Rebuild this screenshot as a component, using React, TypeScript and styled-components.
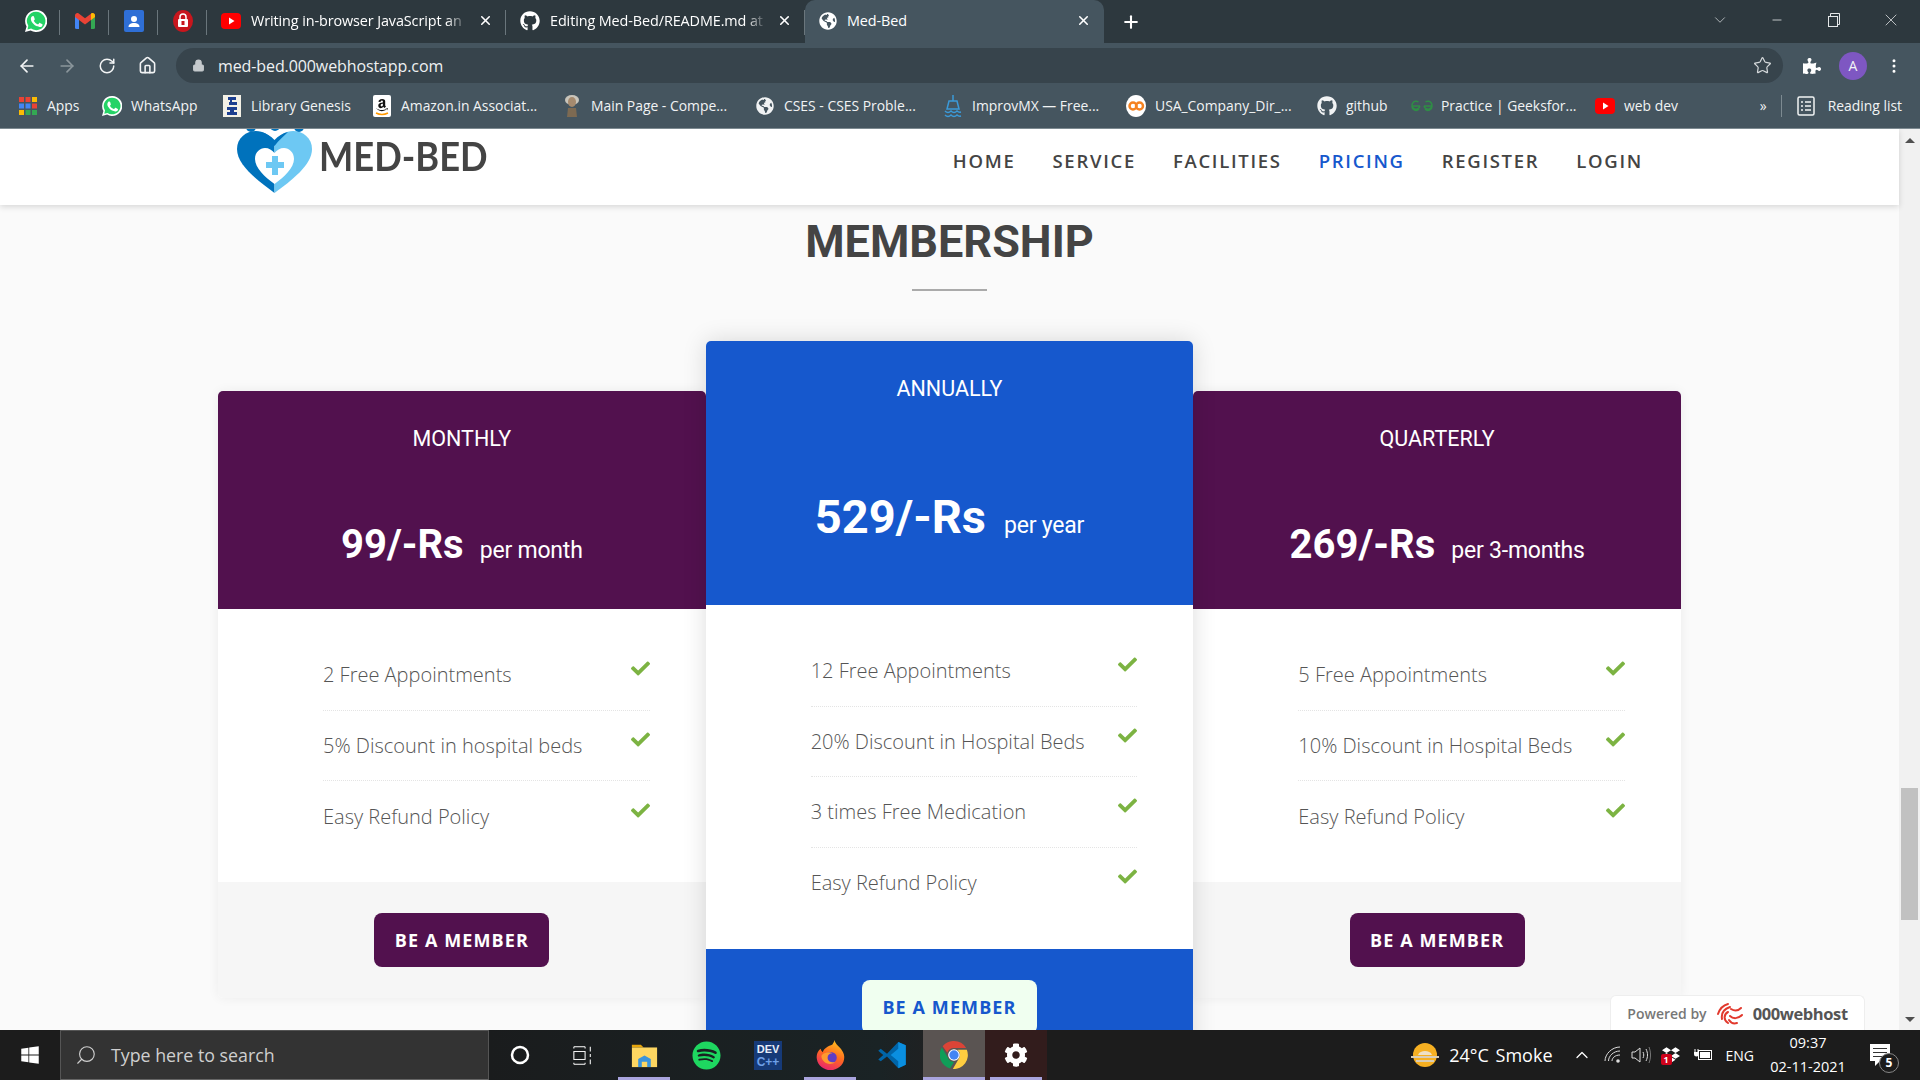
import React from "react"
import styled, {createGlobalStyle} from "styled-components"
import {ArrowLeft, ArrowRight, RotateCw, Home, Star, X, Plus, ChevronDown, Minus, Lock, MoreVertical, ChevronUp, Search} from "lucide-react"
import {FaGithub, FaGlobeAmericas, FaAmazon, FaPuzzlePiece, FaCheck, FaWindows, FaSpotify, FaCog, FaDropbox} from "react-icons/fa"

const GlobalStyle = createGlobalStyle`
    html, body {
        margin: 0;
        padding: 0;
        overflow: hidden;
        background: #fafafa;
    }
    * {
        box-sizing: border-box;
    }
`

const Screen = styled.div`
    width: 1920px;
    height: 1080px;
    display: flex;
    flex-direction: column;
    overflow: hidden;
    font-family: "Open Sans", "Liberation Sans", sans-serif;
`

/* browser chrome */
const TabStrip = styled.div`
    height: 43px;
    flex: none;
    display: flex;
    align-items: stretch;
    padding-left: 11px;
    background: #2d383e;
    color: #fff;
`

const PinnedTab = styled.div`
    width: 49px;
    display: flex;
    align-items: center;
    justify-content: center;
    padding-bottom: 2px;
    position: relative;
    &::after {
        content: "";
        position: absolute;
        right: 0;
        top: 10px;
        bottom: 8px;
        width: 1px;
        background: #6a767c;
    }
`

const Tab = styled.div<{$active?: boolean}>`
    width: 299px;
    display: flex;
    align-items: center;
    gap: 10px;
    padding: 0 13px 2px 14px;
    font-size: 14.4px;
    position: relative;
    ${({$active}) => $active ? `
        background: #45555f;
        border-radius: 10px 10px 0 0;
    ` : `
        &::after {
            content: "";
            position: absolute;
            right: 0;
            top: 10px;
            bottom: 8px;
            width: 1px;
            background: #6a767c;
        }
    `}
`

const TabTitle = styled.span<{$fade?: boolean}>`
    flex: 1;
    min-width: 0;
    white-space: nowrap;
    letter-spacing: -0.1px;
    ${({$fade}) => $fade && `
        -webkit-mask-image: linear-gradient(to right, #000 90%, transparent 100%);
        mask-image: linear-gradient(to right, #000 90%, transparent 100%);
    `}
`

const NewTab = styled.div`
    width: 54px;
    display: flex;
    align-items: center;
    justify-content: center;
`

const WindowControls = styled.div`
    margin-left: auto;
    display: flex;
    align-items: center;
    padding-bottom: 4px;
`

const WindowButton = styled.div<{$width: number}>`
    width: ${({$width}) => $width}px;
    display: flex;
    justify-content: center;
    color: #d6dadc;
`

const RestoreIcon = () => (
    <svg width="14" height="14" viewBox="0 0 14 14" fill="none" stroke="#e4e7e8" strokeWidth="1">
        <rect x="1.5" y="3.5" width="9" height="10" />
        <path d="M3.5 3.5V0.5H12.5V11.5H10.5" />
    </svg>
)

const Toolbar = styled.div`
    height: 45px;
    flex: none;
    display: flex;
    align-items: center;
    padding-left: 7px;
    background: #45555f;
    color: #fff;
`

const ToolButton = styled.div<{$dim?: boolean}>`
    width: 40px;
    display: flex;
    justify-content: center;
    color: ${({$dim}) => $dim ? "#8b969c" : "#f2f4f5"};
`

const AddressPill = styled.div`
    width: 1607px;
    height: 35px;
    margin-left: 9px;
    padding: 0 11px 0 16px;
    display: flex;
    align-items: center;
    gap: 13px;
    border-radius: 18px;
    background: #37444c;
    font-size: 16px;
    letter-spacing: -0.1px;
    color: #eef1f2;
`

const AddressText = styled.span`
    flex: 1;
`

const ToolGroup = styled.div`
    display: flex;
    align-items: center;
    gap: 12px;
    padding-left: 20px;
`

const Avatar = styled.div`
    width: 28px;
    height: 28px;
    border-radius: 50%;
    background: #7e57c2;
    font-size: 14px;
    display: flex;
    align-items: center;
    justify-content: center;
`

const BookmarkBar = styled.div`
    height: 41px;
    flex: none;
    display: flex;
    align-items: center;
    padding: 0 0 5px 19px;
    background: #45555f;
    color: #f1f3f4;
    font-size: 13.9px;
    border-bottom: 1px solid #7d8a91;
`

const Bookmark = styled.div<{$width: number}>`
    width: ${({$width}) => $width}px;
    flex: none;
    display: flex;
    align-items: center;
    gap: 10px;
    white-space: nowrap;
`

const BookmarkIcon = styled.span`
    width: 18px;
    flex: none;
    display: flex;
    align-items: center;
    justify-content: center;
    & svg {
        flex: none;
    }
`

const BookmarkEnd = styled.div`
    margin-left: auto;
    display: flex;
    align-items: center;
    padding-right: 18px;
    white-space: nowrap;
    & b {
        font-weight: 400;
        margin-right: 14px;
    }
    & i {
        width: 1px;
        height: 22px;
        background: #7d8a91;
        margin-right: 15px;
    }
    & span {
        margin-left: 13px;
    }
`

/* page */
const Viewport = styled.div`
    flex: 1;
    min-height: 0;
    display: flex;
    position: relative;
    overflow: hidden;
`

const Page = styled.div`
    width: 1899px;
    background: #fafafa;
`

const Scrollbar = styled.div`
    width: 21px;
    background: #f1f1f1;
    display: flex;
    flex-direction: column;
    align-items: center;
    justify-content: space-between;
    padding: 9px 0 8px;
    position: relative;
`

const ScrollArrow = styled.div<{$down?: boolean}>`
    width: 0;
    height: 0;
    border-left: 5px solid transparent;
    border-right: 5px solid transparent;
    ${({$down}) => $down ? "border-top: 5px solid #505050;" : "border-bottom: 5px solid #505050;"}
`

const ScrollThumb = styled.div`
    position: absolute;
    left: 2px;
    right: 2px;
    top: 659px;
    height: 132px;
    background: #c1c1c1;
`

const Header = styled.header`
    height: 76px;
    background: #fff;
    box-shadow: 0 2px 6px rgba(0, 0, 0, 0.14);
    display: flex;
    align-items: flex-start;
    justify-content: space-between;
    padding: 0 256px 0 237px;
    position: relative;
    z-index: 3;
`

const Brand = styled.div`
    display: flex;
    align-items: flex-start;
    gap: 7px;
    height: 64px;
    overflow: hidden;
    font-family: "Lato", sans-serif;
    & svg {
        flex: none;
        margin-top: -9px;
    }
`

const BrandName = styled.span`
    font-size: 41px;
    line-height: 54px;
    font-weight: 700;
    color: #444;
    transform: scaleX(0.885);
    transform-origin: left center;
`

const Nav = styled.nav`
    display: flex;
    gap: 37px;
    padding-top: 18px;
`

const NavLink = styled.a<{$active?: boolean}>`
    font-size: 18.5px;
    line-height: 28px;
    font-weight: 600;
    letter-spacing: 1.7px;
    color: ${({$active}) => $active ? "#1658cd" : "#444"};
`

const Section = styled.section`
    display: flex;
    flex-direction: column;
    align-items: center;
`

const Title = styled.h2`
    margin: 10px 0 0;
    font-family: "Roboto", sans-serif;
    font-size: 45px;
    line-height: 54px;
    font-weight: 700;
    color: #444;
`

const TitleRule = styled.div`
    width: 75px;
    height: 2px;
    margin-top: 20px;
    background: #aaa;
`

const Plans = styled.div`
    width: 1463px;
    margin-top: 50px;
    display: grid;
    grid-template-columns: repeat(3, 1fr);
    align-items: start;
`

const Card = styled.div<{$featured?: boolean}>`
    background: #fff;
    border-radius: 5px;
    overflow: hidden;
    ${({$featured}) => $featured ? `
        position: relative;
        z-index: 2;
        box-shadow: 0 0 25px rgba(0, 0, 0, 0.14);
    ` : `
        margin-top: 50px;
        box-shadow: 0 0 12px rgba(0, 0, 0, 0.06);
    `}
`

const CardHead = styled.div<{$featured?: boolean}>`
    height: ${({$featured}) => $featured ? 264 : 218}px;
    padding-top: 35px;
    background: ${({$featured}) => $featured ? "#1658cd" : "#52114e"};
    color: #fff;
    font-family: "Roboto", sans-serif;
    text-align: center;
`

const PlanName = styled.div`
    font-size: 21.5px;
    line-height: 26px;
    font-weight: 400;
`

const Price = styled.div<{$featured?: boolean}>`
    margin-top: ${({$featured}) => $featured ? 87 : 65}px;
    display: flex;
    align-items: baseline;
    justify-content: center;
    gap: ${({$featured}) => $featured ? 18 : 16}px;
    line-height: 56px;
`

const Amount = styled.span<{$featured?: boolean}>`
    font-size: ${({$featured}) => $featured ? 47 : 40}px;
    font-weight: 700;
`

const Per = styled.span`
    font-size: 23px;
    font-weight: 400;
    letter-spacing: -0.2px;
`

const Features = styled.ul`
    list-style: none;
    margin: 0;
    padding: 31px 56px 30.5px 105px;
`

const Feature = styled.li`
    height: 70.5px;
    display: flex;
    align-items: center;
    justify-content: space-between;
    border-bottom: 1px dotted #e4e4e4;
    font-size: 20px;
    font-weight: 300;
    color: #555;
    &:last-child {
        border-bottom: none;
    }
    & svg {
        margin-bottom: 12px;
        color: #7cb342;
    }
`

const CardFoot = styled.div<{$featured?: boolean}>`
    height: 116px;
    padding-top: 31px;
    display: flex;
    justify-content: center;
    background: ${({$featured}) => $featured ? "#1658cd" : "#f6f6f6"};
`

const MemberButton = styled.button<{$featured?: boolean}>`
    width: 175px;
    height: 54px;
    border: none;
    border-radius: 8px;
    font-family: "Open Sans", sans-serif;
    font-size: 18px;
    font-weight: 700;
    letter-spacing: 1.1px;
    background: ${({$featured}) => $featured ? "#f0fff0" : "#52114e"};
    color: ${({$featured}) => $featured ? "#1658cd" : "#fff"};
`

const HostBadge = styled.div`
    position: absolute;
    right: 55px;
    bottom: 0;
    width: 255px;
    height: 35px;
    display: flex;
    align-items: center;
    justify-content: center;
    gap: 9px;
    background: #fff;
    border: 1px solid #eee;
    border-bottom: none;
    border-radius: 6px 6px 0 0;
    z-index: 4;
    font-size: 14px;
    font-weight: 600;
    color: #777;
`

const HostName = styled.span`
    font-size: 16.5px;
    font-weight: 700;
    color: #555;
    letter-spacing: -0.4px;
`

/* windows taskbar */
const Taskbar = styled.div`
    height: 50px;
    flex: none;
    display: flex;
    align-items: stretch;
    background: #1c1c1c;
    color: #fff;
`

const StartButton = styled.div`
    width: 60px;
    display: flex;
    align-items: center;
    justify-content: center;
`

const SearchBox = styled.div`
    width: 429px;
    display: flex;
    align-items: center;
    gap: 14px;
    padding-left: 14px;
    background: #333;
    border: 1px solid #555;
    border-bottom-color: #666;
    color: #cfcfcf;
    font-size: 17.8px;
`

const MirroredSearch = styled(Search)`
    transform: scaleX(-1);
`

const AppIcons = styled.div`
    display: flex;
    background: linear-gradient(to right, #1a1c1d, #1a2325 70%, #2c1c1c);
`

const AppTile = styled.div<{$active?: boolean, $open?: boolean, $tint?: string}>`
    width: 62px;
    display: flex;
    align-items: center;
    justify-content: center;
    position: relative;
    background: ${({$active, $tint}) => $active ? "#5a5452" : $tint || "transparent"};
    ${({$open, $active}) => ($open || $active) && `
        &::after {
            content: "";
            position: absolute;
            left: ${$active ? 0 : 5}px;
            right: ${$active ? 0 : 5}px;
            bottom: 0;
            height: 3px;
            background: #a9a4de;
        }
    `}
`

const Tray = styled.div`
    margin-left: auto;
    display: flex;
    align-items: center;
    padding-right: 20px;
`

const Weather = styled.div`
    display: flex;
    align-items: center;
    gap: 10px;
    font-size: 18px;
    white-space: nowrap;
    margin-right: 13px;
    & span {
        word-spacing: 2px;
    }
`

const TrayIcon = styled.div<{$width: number}>`
    width: ${({$width}) => $width}px;
    display: flex;
    justify-content: center;
    position: relative;
`

const TrayBadge = styled.b`
    position: absolute;
    left: 6px;
    top: 8px;
    width: 11px;
    height: 11px;
    border-radius: 2px;
    background: #d0021b;
    font-size: 9px;
    line-height: 11px;
    text-align: center;
`

const Lang = styled.div`
    font-size: 14px;
    margin: 0 9px 0 8px;
`

const Clock = styled.div`
    width: 90px;
    text-align: center;
    font-size: 14.5px;
    line-height: 24px;
    margin-right: 7px;
`

const Notify = styled.div`
    width: 40px;
    display: flex;
    justify-content: center;
    position: relative;
`

const NotifyCount = styled.b`
    position: absolute;
    right: 1px;
    top: 9px;
    width: 20px;
    height: 20px;
    border-radius: 50%;
    background: #1c1c1c;
    border: 1px solid #888;
    font-size: 12px;
    line-height: 18px;
    text-align: center;
`

/* small drawn icons */
const WhatsApp = ({size}: {size: number}) => (
    <svg width={size} height={size} viewBox="0 0 24 24">
        <path fill="#fff" d="M12 0a12 12 0 0 0-10.300 18L0 24l6.200-1.700A12 12 0 1 0 12 0z" />
        <path fill="#25d366" d="M12 2a10 10 0 0 0-8.400 15.300L2.700 21.300l4-1A10 10 0 1 0 12 2z" />
        <path fill="#fff" d="M8.600 6.600c-.4 0-.9.200-1.200.6-.5.600-1 1.400-1 2.600 0 1.500 1 3.100 1.200 3.300.2.300 2.200 3.500 5.400 4.700 2.600 1 3.200.8 3.800.8.600-.1 1.900-.8 2.100-1.500.3-.8.300-1.400.2-1.500-.1-.2-.3-.3-.6-.4l-2.200-1.100c-.3-.1-.5-.1-.7.200l-1 1.200c-.2.200-.4.200-.7.100-.3-.2-1.300-.5-2.500-1.500-.9-.8-1.500-1.800-1.700-2.100-.2-.3 0-.5.100-.6l.5-.6.300-.5c.1-.2.100-.4 0-.5L9.800 7.300c-.2-.6-.5-.6-.7-.7h-.5z" />
    </svg>
)

const Gmail = () => (
    <svg width="20" height="16" viewBox="0 0 20 16">
        <path fill="#4285f4" d="M0 3h4v13H1.500A1.500 1.500 0 0 1 0 14.500z" />
        <path fill="#34a853" d="M16 3h4v11.500a1.500 1.500 0 0 1-1.500 1.500H16z" />
        <path fill="#ea4335" d="M0 2.500C0 .5 2.200-.6 3.700.5L10 5.200 16.300.5C17.800-.6 20 .5 20 2.500V4l-4 3-6 4.500L4 7 0 4z" />
        <path fill="#fbbc04" d="M16 7l4-3V2.500C20 .5 17.800-.6 16.300.5L16 .8z" />
    </svg>
)

const Contacts = () => (
    <svg width="20" height="22" viewBox="0 0 20 22">
        <rect width="20" height="22" rx="2" fill="#2f6fd6" />
        <circle cx="10" cy="9" r="3" fill="#fff" />
        <path fill="#fff" d="M4.500 17c0-3 2.500-4 5.500-4s5.500 1 5.500 4z" />
    </svg>
)

const RedLock = () => (
    <svg width="20" height="22" viewBox="0 0 20 22">
        <ellipse cx="10" cy="11" rx="10" ry="11" fill="#c8161d" />
        <rect x="5" y="9" width="10" height="8" rx="1" fill="#fff" />
        <path fill="none" stroke="#fff" strokeWidth="1.500" d="M7 9V7a3 3 0 0 1 6 0v2" />
        <rect x="8.500" y="11" width="3" height="4" fill="#c8161d" />
    </svg>
)

const YouTube = () => (
    <svg width="20" height="16" viewBox="0 0 20 16">
        <rect width="20" height="16" rx="4" fill="#f00" />
        <path fill="#fff" d="M8 4.500v7L13.500 8z" />
    </svg>
)

const AppsGrid = () => (
    <svg width="18" height="18" viewBox="0 0 18 18">
        {["#ea4335", "#ea4335", "#fbbc04", "#4285f4", "#4285f4", "#ea4335", "#fbbc04", "#34a853", "#34a853"].map((c, i) => (
            <rect key={i} x={(i % 3) * 6.5} y={Math.floor(i / 3) * 6.5} width="5" height="5" fill={c} />
        ))}
    </svg>
)

const LibGenBook = () => (
    <svg width="18" height="22" viewBox="0 0 18 22">
        <rect width="18" height="22" fill="#f4f1e6" />
        <path fill="#1d3f8f" d="M5 2h8v3H9v2h5v3H6V7h1V5H5zM4 12h10v3h-3v2h3v3H4v-3h3v-2H4z" />
    </svg>
)

const AmazonIcon = () => (
    <svg width="18" height="22" viewBox="0 0 18 22">
        <rect width="18" height="22" rx="2" fill="#fff" />
        <foreignObject x="2" y="2" width="14" height="16"><div><FaAmazon size={14} color="#111" /></div></foreignObject>
        <path d="M3 18c4 2 8 2 12 0" fill="none" stroke="#f90" strokeWidth="1.500" />
    </svg>
)

const Einstein = () => (
    <svg width="18" height="24" viewBox="0 0 18 24">
        <ellipse cx="9" cy="6" rx="7" ry="5" fill="#c9c5bb" />
        <ellipse cx="9" cy="8" rx="4" ry="5" fill="#a58a6e" />
        <path fill="#7d6a52" d="M5 14h8l1 9H4z" />
    </svg>
)

const ImprovMX = () => (
    <svg width="18" height="24" viewBox="0 0 18 24" fill="none" stroke="#3b9ad9" strokeWidth="1.500">
        <path d="M9 1v6M5 7h8l2 8H3zM1 17c2 2 4 2 6 0 2 2 4 2 6 0 1 1 2 1.500 4 1M1 21c2 2 4 2 6 0 2 2 4 2 6 0 1 1 2 1.500 4 1" />
    </svg>
)

const CoBadge = () => (
    <svg width="20" height="22" viewBox="0 0 20 22">
        <ellipse cx="10" cy="11" rx="10" ry="11" fill="#fff" />
        <circle cx="7" cy="11" r="3.500" fill="none" stroke="#f58220" strokeWidth="2.500" />
        <circle cx="13.500" cy="11" r="3.500" fill="none" stroke="#f58220" strokeWidth="2.500" />
    </svg>
)

const Geeks = () => (
    <svg width="22" height="14" viewBox="0 0 22 14" fill="none" stroke="#2f8d46" strokeWidth="1.500">
        <path d="M1 7h8M9 7a4 4 0 1 1-1.500-4M13 7h8M13 7a4 4 0 1 0 1.500-4M1 7a4 4 0 0 0 7 3M21 7a4 4 0 0 1-7 3" />
    </svg>
)

const ReadingList = () => (
    <svg width="18" height="20" viewBox="0 0 18 20" fill="none" stroke="#f1f3f4" strokeWidth="1.500">
        <rect x="1" y="1" width="16" height="18" rx="1.500" />
        <path d="M4 6h2M8 6h6M4 10h2M8 10h6M4 14h2M8 14h6" />
    </svg>
)

const MedBedLogo = () => (
    <svg width="75" height="73" viewBox="0 0 75 73">
        <path fill="#0072bc" d="M37.500 73C20 60 0 45 0 29 0 18 9 11 19 11c7 0 14 4 18.500 11z" />
        <path fill="#6dc8f3" d="M37.500 73C55 60 75 45 75 29 75 18 66 11 56 11c-7 0-14 4-18.500 11z" />
        <path fill="#fff" d="M37.500 64C28 57 18 48 18 39c0-7 5-11 10-11 4 0 7 2 9.500 5 2.500-3 5.500-5 9.500-5 5 0 10 4 10 11 0 9-10 18-19.500 25z" />
        <path fill="#6dc8f3" d="M35 36h6v6h6v6h-6v7h-6v-7h-6v-6h6z" />
        <path fill="#0072bc" d="M24 12c5 1 10 4 13.500 8 3.500-4 8.500-7 13.500-8-4 4-9 8-13.500 14C33 20 28 16 24 12z" />
        <circle cx="14" cy="7" r="5" fill="#0072bc" />
        <circle cx="38" cy="6" r="5" fill="#0072bc" />
        <circle cx="62" cy="7" r="5" fill="#0072bc" />
    </svg>
)

const HostSwirl = () => (
    <svg width="28" height="24" viewBox="0 0 26 24" fill="none" stroke="#e2392d" strokeWidth="2" strokeLinecap="round">
        <path d="M1 13C3 7 7 4 11 3M5 18C4 12 7 8 13 6M11 22C6 19 7 13 11 11M24 7c-3 3-7 3-10 1M25 14c-4 4-9 4-12 1M20 22c-3 1-6 0-8-3" />
    </svg>
)

const Explorer = () => (
    <svg width="27" height="25" viewBox="0 0 30 28" preserveAspectRatio="none">
        <path fill="#e6a50c" d="M1 2h10l3 3h-13z" />
        <rect x="1" y="5" width="28" height="22" fill="#fdd661" />
        <path fill="#3a94dc" d="M8 27v-9l7-4 7 4v9h-4v-6h-6v6z" />
    </svg>
)

const DevCpp = () => (
    <svg width="28" height="29" viewBox="0 0 28 29">
        <rect width="28" height="29" fill="#163a78" />
        <text x="14" y="12" textAnchor="middle" fontSize="11" fontWeight="700" fill="#e8eef8" fontFamily="Liberation Sans, sans-serif">DEV</text>
        <text x="14" y="25" textAnchor="middle" fontSize="12" fontWeight="700" fill="#6fa0e8" fontFamily="Liberation Sans, sans-serif">C++</text>
    </svg>
)

const Firefox = () => (
    <svg width="29" height="30" viewBox="0 0 30 34" preserveAspectRatio="none">
        <defs>
            <linearGradient id="fxBody" x1="0.7" y1="0" x2="0.3" y2="1">
                <stop offset="0" stopColor="#ffc21f" />
                <stop offset="0.5" stopColor="#ff6a1f" />
                <stop offset="1" stopColor="#e8246e" />
            </linearGradient>
        </defs>
        <path fill="url(#fxBody)" d="M19 0c1 4 3 6 6 9 3 4 5 8 4 13-1 7-7 12-14 12S2 29 1 22C0 17 2 12 5 10c0 2 1 3 2 4 1-5 6-7 10-9 1-2 2-3 2-5z" />
        <circle cx="15" cy="20" r="6.500" fill="#5f3dc4" />
        <path fill="#ff9a2e" d="M6 17c3-3 8-4 11-2-3 0-5 2-5 5 0 4 4 6 8 5-3 3-9 3-12-1-2-2-3-5-2-7z" />
    </svg>
)

const VsCode = () => (
    <svg width="30" height="30" viewBox="0 0 24 24">
        <path fill="#0065a9" d="M1 8.500 3 7l5 3.900L17 1.500l6 2.700v15.600l-6 2.700-9-9.400L3 17l-2-1.500L5 12z" />
        <path fill="#0a8fe0" d="M17 1.500l6 2.700v15.600l-6 2.700V17l-6-5 6-5z" />
    </svg>
)

const ChromeLogo = () => (
    <svg width="28" height="28" viewBox="0 0 24 24">
        <path fill="#db4437" d="M12 0a12 12 0 0 1 10.400 6H12a6 6 0 0 0-5.700 4L2.300 4.400A12 12 0 0 1 12 0z" />
        <path fill="#0f9d58" d="M1.600 5.500l5 8.500A6 6 0 0 0 12 18l-3.400 5.500A12 12 0 0 1 1.600 5.500z" />
        <path fill="#ffcd40" d="M23 7.500a12 12 0 0 1-12 16.500l5.200-9A6 6 0 0 0 15 7.500z" />
        <circle cx="12" cy="12" r="5" fill="#fff" />
        <circle cx="12" cy="12" r="4" fill="#4285f4" />
    </svg>
)

const Cortana = () => (
    <svg width="20" height="20" viewBox="0 0 20 20" fill="none" stroke="#fff" strokeWidth="2.5">
        <circle cx="10" cy="10" r="8" />
    </svg>
)

const TaskView = () => (
    <svg width="19" height="19" viewBox="0 0 22 24" fill="none" stroke="#fff" strokeWidth="1.2" preserveAspectRatio="none">
        <path d="M1 1h13M1 23h13M14 1v2M1 1v2M1 23v-2M14 23v-2" />
        <rect x="1" y="7" width="13" height="10" />
        <path d="M20 1v6M20 10v4M20 17v6" />
    </svg>
)

const SunCloud = () => (
    <svg width="28" height="28" viewBox="0 0 28 28">
        <circle cx="14" cy="14" r="12" fill="#f6b022" />
        <path fill="#efe0c4" d="M7 14c1-3 4-4 7-4s6 1 7 4z" />
        <path stroke="#d9cdb6" strokeWidth="2" d="M0 16h28M5 20h18" />
    </svg>
)

const WifiArcs = () => (
    <svg width="18" height="18" viewBox="0 0 18 18" fill="none" stroke="#ddd" strokeWidth="1">
        <path d="M1 15C1 8 8 1 16 1M4.500 15c0-5 5-10 11.500-10M8 15c0-3 3-6 8-6" />
        <circle cx="14" cy="15" r="1.800" fill="#ddd" stroke="none" />
    </svg>
)

const Speaker = () => (
    <svg width="20" height="18" viewBox="0 0 20 18" fill="none" stroke="#ddd" strokeWidth="1">
        <path d="M1 6h3l5-4v14l-5-4H1zM12 6c1 2 1 4 0 6M15 3c2 4 2 8 0 12" />
        <path d="M18 1c2 5 2 11 0 16" stroke="#777" />
    </svg>
)

const BatteryPlug = () => (
    <svg width="20" height="14" viewBox="0 0 20 14">
        <path fill="none" stroke="#fff" d="M2 1v3M5 1v3" />
        <path fill="#fff" d="M1 4h5v2a2.500 2.500 0 0 1-5 0z" />
        <rect x="5.500" y="2.500" width="13" height="9" fill="none" stroke="#fff" />
        <rect x="7" y="4" width="10" height="6" fill="#fff" />
    </svg>
)

const ChatBox = () => (
    <svg width="20" height="22" viewBox="0 0 20 22">
        <path fill="#fff" d="M0 0h20v17H10l-5 5v-5H0z" />
        <path stroke="#333" d="M3 4.500h14M3 8.500h14M3 12.500h9" />
    </svg>
)

const plans = [
    {name: "MONTHLY", amount: "99/-Rs", per: "per month", features: ["2 Free Appointments", "5% Discount in hospital beds", "Easy Refund Policy"]},
    {name: "ANNUALLY", amount: "529/-Rs", per: "per year", featured: true, features: ["12 Free Appointments", "20% Discount in Hospital Beds", "3 times Free Medication", "Easy Refund Policy"]},
    {name: "QUARTERLY", amount: "269/-Rs", per: "per 3-months", features: ["5 Free Appointments", "10% Discount in Hospital Beds", "Easy Refund Policy"]},
]

const bookmarks: [React.ReactNode, string, number][] = [
    [<AppsGrid />, "Apps", 84],
    [<WhatsApp size={20} />, "WhatsApp", 120],
    [<LibGenBook />, "Library Genesis", 150],
    [<AmazonIcon />, "Amazon.in Associat...", 190],
    [<Einstein />, "Main Page - Compe...", 193],
    [<FaGlobeAmericas size={18} />, "CSES - CSES Proble...", 188],
    [<ImprovMX />, "ImprovMX — Free...", 183],
    [<CoBadge />, "USA_Company_Dir_...", 191],
    [<FaGithub size={20} />, "github", 95],
    [<Geeks />, "Practice | Geeksfor...", 183],
    [<YouTube />, "web dev", 90],
]

export default function App() {
    return (
        <Screen>
            <GlobalStyle />
            <TabStrip>
                <PinnedTab><WhatsApp size={22} /></PinnedTab>
                <PinnedTab><Gmail /></PinnedTab>
                <PinnedTab><Contacts /></PinnedTab>
                <PinnedTab><RedLock /></PinnedTab>
                <Tab><YouTube /><TabTitle $fade>Writing in-browser JavaScript an</TabTitle><X size={15} strokeWidth={2.5} /></Tab>
                <Tab><FaGithub size={20} /><TabTitle $fade>Editing Med-Bed/README.md at</TabTitle><X size={15} strokeWidth={2.5} /></Tab>
                <Tab $active><FaGlobeAmericas size={18} /><TabTitle>Med-Bed</TabTitle><X size={15} strokeWidth={2.5} /></Tab>
                <NewTab><Plus size={20} strokeWidth={2.5} /></NewTab>
                <WindowControls>
                    <WindowButton $width={57}><ChevronDown size={18} strokeWidth={1} /></WindowButton>
                    <WindowButton $width={57}><Minus size={14} strokeWidth={1.5} /></WindowButton>
                    <WindowButton $width={57}><RestoreIcon /></WindowButton>
                    <WindowButton $width={58}><X size={20} strokeWidth={1} /></WindowButton>
                </WindowControls>
            </TabStrip>
            <Toolbar>
                <ToolButton><ArrowLeft size={20} /></ToolButton>
                <ToolButton $dim><ArrowRight size={20} /></ToolButton>
                <ToolButton><RotateCw size={18} /></ToolButton>
                <ToolButton><Home size={19} /></ToolButton>
                <AddressPill>
                    <Lock size={13} color="#c5cacd" fill="#c5cacd" />
                    <AddressText>med-bed.000webhostapp.com</AddressText>
                    <Star size={19} color="#d6dadc" strokeWidth={1.5} />
                </AddressPill>
                <ToolGroup>
                    <FaPuzzlePiece size={18} />
                    <ToolButton><Avatar>A</Avatar></ToolButton>
                    <MoreVertical size={18} />
                </ToolGroup>
            </Toolbar>
            <BookmarkBar>
                {bookmarks.map(([icon, label, width]) => (
                    <Bookmark key={label} $width={width}><BookmarkIcon>{icon}</BookmarkIcon>{label}</Bookmark>
                ))}
                <BookmarkEnd><b>»</b><i /><ReadingList /><span>Reading list</span></BookmarkEnd>
            </BookmarkBar>
            <Viewport>
                <Page>
                    <Header>
                        <Brand><MedBedLogo /><BrandName>MED-BED</BrandName></Brand>
                        <Nav>
                            <NavLink>HOME</NavLink>
                            <NavLink>SERVICE</NavLink>
                            <NavLink>FACILITIES</NavLink>
                            <NavLink $active>PRICING</NavLink>
                            <NavLink>REGISTER</NavLink>
                            <NavLink>LOGIN</NavLink>
                        </Nav>
                    </Header>
                    <Section>
                        <Title>MEMBERSHIP</Title>
                        <TitleRule />
                        <Plans>
                            {plans.map(plan => (
                                <Card key={plan.name} $featured={plan.featured}>
                                    <CardHead $featured={plan.featured}>
                                        <PlanName>{plan.name}</PlanName>
                                        <Price $featured={plan.featured}>
                                            <Amount $featured={plan.featured}>{plan.amount}</Amount>
                                            <Per>{plan.per}</Per>
                                        </Price>
                                    </CardHead>
                                    <Features>
                                        {plan.features.map(item => (
                                            <Feature key={item}>{item}<FaCheck size={19} /></Feature>
                                        ))}
                                    </Features>
                                    <CardFoot $featured={plan.featured}>
                                        <MemberButton $featured={plan.featured}>BE A MEMBER</MemberButton>
                                    </CardFoot>
                                </Card>
                            ))}
                        </Plans>
                    </Section>
                </Page>
                <Scrollbar>
                    <ScrollArrow />
                    <ScrollThumb />
                    <ScrollArrow $down />
                </Scrollbar>
                <HostBadge>
                    Powered by <HostSwirl /><HostName>000webhost</HostName>
                </HostBadge>
            </Viewport>
            <Taskbar>
                <StartButton><FaWindows size={20} /></StartButton>
                <SearchBox><MirroredSearch size={22} strokeWidth={1.25} />Type here to search</SearchBox>
                <AppIcons>
                    <AppTile><Cortana /></AppTile>
                    <AppTile><TaskView /></AppTile>
                    <AppTile $open><Explorer /></AppTile>
                    <AppTile><FaSpotify size={29} color="#1ed760" /></AppTile>
                    <AppTile><DevCpp /></AppTile>
                    <AppTile $open><Firefox /></AppTile>
                    <AppTile><VsCode /></AppTile>
                    <AppTile $active><ChromeLogo /></AppTile>
                    <AppTile $open $tint="#321c1c"><FaCog size={24} /></AppTile>
                </AppIcons>
                <Tray>
                    <Weather><SunCloud /><span>24°C Smoke</span></Weather>
                    <TrayIcon $width={32}><ChevronUp size={20} strokeWidth={1.5} /></TrayIcon>
                    <TrayIcon $width={30}><WifiArcs /></TrayIcon>
                    <TrayIcon $width={27}><Speaker /></TrayIcon>
                    <TrayIcon $width={33}><FaDropbox size={18} /><TrayBadge>1</TrayBadge></TrayIcon>
                    <TrayIcon $width={30}><BatteryPlug /></TrayIcon>
                    <Lang>ENG</Lang>
                    <Clock>09:37<br />02-11-2021</Clock>
                    <Notify><ChatBox /><NotifyCount>5</NotifyCount></Notify>
                </Tray>
            </Taskbar>
        </Screen>
    )
}
